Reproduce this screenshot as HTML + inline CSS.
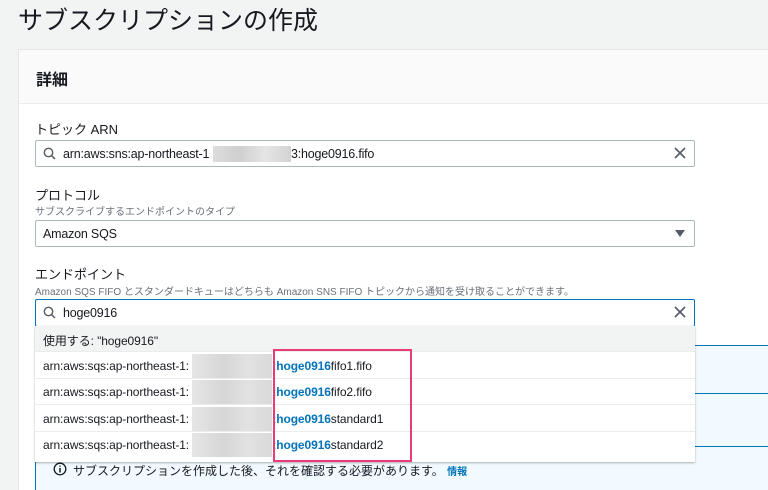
<!DOCTYPE html>
<html><head><meta charset="utf-8"><style>
*{box-sizing:border-box;margin:0;padding:0}
body{width:768px;height:490px;overflow:hidden;background:#f2f3f3;font-family:"Liberation Sans","Noto Sans CJK JP",sans-serif;color:#16191f;position:relative}
.abs{position:absolute}
h1{position:absolute;left:18px;top:1px;font-size:25px;font-weight:400;color:#16191f}
.card{position:absolute;left:18px;top:49px;right:0;bottom:0;background:#fff;border-left:1px solid #e5e7e7;border-top:1px solid #e5e7e7}
.chead{position:absolute;left:0;right:0;top:0;height:54px;background:#fafafa;border-bottom:1px solid #eaeded}
.chead span{position:absolute;left:17px;top:16px;font-size:16px;font-weight:700}
.lbl{position:absolute;left:35px;font-size:13px;color:#16191f}
.sub{position:absolute;left:35px;font-size:10px;color:#687078}
.inp{position:absolute;left:35px;width:660px;height:27px;border:1px solid #aab7b8;border-radius:2px;background:#fff;font-size:12.5px;letter-spacing:-0.2px}
.inp .t{position:absolute;top:6px}
.x{position:absolute;right:7px;top:5px}
.dd{position:absolute;left:35px;top:326px;width:660px;height:136px;background:#fff;box-shadow:0 1px 2px rgba(0,0,0,.3);font-size:12px;letter-spacing:-0.1px}
.row{position:absolute;left:0;right:0;height:26px;border-bottom:1px solid #eaeded}
.row span{position:absolute;left:8px;top:6px}
.blur{position:absolute;left:157px;width:80px;height:24px;background:linear-gradient(90deg,#e6e6e6,#d6d6d6 40%,#e2e2e2 70%,#d9d9d9)}
.b{color:#0073bb;font-weight:700}
</style></head><body>
<h1>サブスクリプションの作成</h1>
<div class="card"><div class="chead"><span>詳細</span></div></div>
<div class="lbl" style="top:119px">トピック ARN</div>
<div class="inp" style="top:140px">
<svg class="abs" style="left:7px;top:6px" width="13" height="13" viewBox="0 0 13 13"><circle cx="5.5" cy="5.5" r="4.2" fill="none" stroke="#545b64" stroke-width="1.4"/><path d="M8.5 8.5L12 12" stroke="#545b64" stroke-width="1.5"/></svg>
<span class="t" style="left:27px">arn:aws:sns:ap-northeast-1</span>
<div class="abs" style="left:177px;top:5px;width:78px;height:16px;background:linear-gradient(90deg,#ddd,#cfcfcf,#e5e5e5,#d3d3d3)"></div>
<span class="t" style="left:255px">3:hoge0916.fifo</span>
<svg class="x" width="14" height="14" viewBox="0 0 14 14"><path d="M2 2L12 12M12 2L2 12" stroke="#545b64" stroke-width="1.6"/></svg>
</div>
<div class="lbl" style="top:185px">プロトコル</div>
<div class="sub" style="top:203px">サブスクライブするエンドポイントのタイプ</div>
<div class="inp" style="top:220px"><span class="t" style="left:7px">Amazon SQS</span>
<svg class="abs" style="right:9px;top:9px" width="10" height="8" viewBox="0 0 10 8"><path d="M0 0H10L5 7Z" fill="#545b64"/></svg></div>
<div class="lbl" style="top:264px">エンドポイント</div>
<div class="sub" style="top:283px">Amazon SQS FIFO とスタンダードキューはどちらも Amazon SNS FIFO トピックから通知を受け取ることができます。</div>
<div class="abs" style="left:35px;top:345px;right:0;bottom:0;background:#f1faff;border:1px solid #0073bb;border-right:none;border-bottom:none"></div>
<div class="abs" style="left:695px;top:393px;right:0;height:1px;background:#0073bb"></div>
<div class="abs" style="left:695px;top:446px;right:0;height:1px;background:#0073bb"></div>
<svg class="abs" style="left:53px;top:462px" width="14" height="14" viewBox="0 0 14 14"><circle cx="7" cy="7" r="5.8" fill="none" stroke="#16191f" stroke-width="1.3"/><path d="M7 6V10.5M7 3.6V4.8" stroke="#16191f" stroke-width="1.5"/></svg>
<div class="abs" style="left:73px;top:462px;font-size:12px">サブスクリプションを作成した後、それを確認する必要があります。 <span style="color:#0073bb;font-weight:700;font-size:10px">情報</span></div>
<div class="inp" style="top:299px;border:1px solid #0073bb;height:28px">
<svg class="abs" style="left:7px;top:6px" width="13" height="13" viewBox="0 0 13 13"><circle cx="5.5" cy="5.5" r="4.2" fill="none" stroke="#545b64" stroke-width="1.4"/><path d="M8.5 8.5L12 12" stroke="#545b64" stroke-width="1.5"/></svg>
<span class="t" style="left:27px">hoge0916</span>
<svg class="x" width="14" height="14" viewBox="0 0 14 14"><path d="M2 2L12 12M12 2L2 12" stroke="#545b64" stroke-width="1.6"/></svg>
</div>
<div class="dd">
<div class="row" style="top:0;background:#f2f3f3"><span>使用する: "hoge0916"</span></div>
<div class="row" style="top:27px"><span>arn:aws:sqs:ap-northeast-1:</span><div class="blur" style="top:1px"></div><span style="left:238px">:<b class="b">hoge0916</b>fifo1.fifo</span></div>
<div class="row" style="top:53px"><span>arn:aws:sqs:ap-northeast-1:</span><div class="blur" style="top:1px"></div><span style="left:238px">:<b class="b">hoge0916</b>fifo2.fifo</span></div>
<div class="row" style="top:80px"><span>arn:aws:sqs:ap-northeast-1:</span><div class="blur" style="top:1px"></div><span style="left:238px">:<b class="b">hoge0916</b>standard1</span></div>
<div class="row" style="top:106px;border:none"><span>arn:aws:sqs:ap-northeast-1:</span><div class="blur" style="top:1px"></div><span style="left:238px">:<b class="b">hoge0916</b>standard2</span></div>
</div>
<div class="abs" style="left:273px;top:349px;width:139px;height:113px;border:2px solid #ea3b76"></div>
</body></html>
